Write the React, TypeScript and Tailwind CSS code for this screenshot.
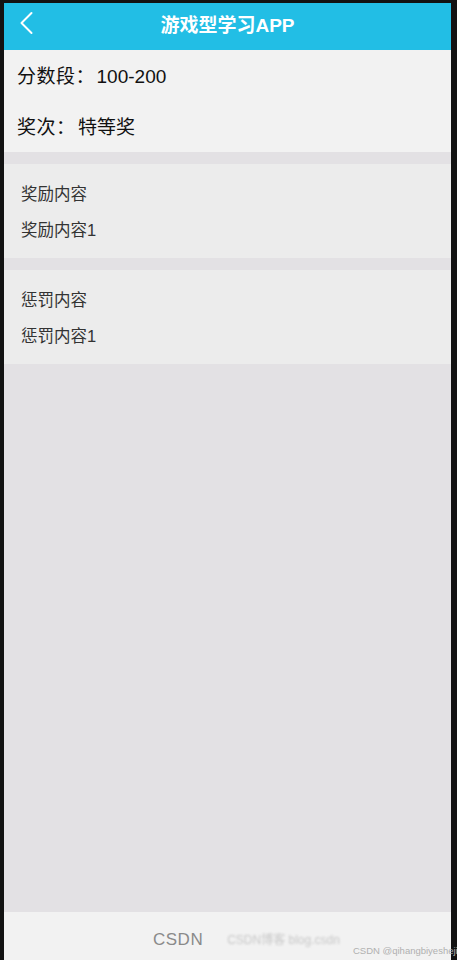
import React from "react";

const font = '"Liberation Sans", Arial, "Noto Sans CJK SC", sans-serif';

function Section({ title, item }: { title: string; item: string }) {
  return (
    <div className="bg-[#ececec] h-[94px] px-[17px] pt-[19px] text-[16.5px] text-[#333]">
      <div className="h-[22px] leading-[22px]">{title}</div>
      <div className="h-[22px] leading-[22px] mt-[14px]">{item}</div>
    </div>
  );
}

export default function App() {
  return (
    <div
      className="w-[457px] h-[960px] bg-[#121212] pt-[3px] pl-[4px] pr-[6px] flex flex-col"
      style={{ fontFamily: font }}
    >
      <div className="flex-1 flex flex-col bg-[#e3e1e4]">
        {/* title bar */}
        <div className="h-[47px] bg-[#22bee5] relative flex items-center justify-center">
          <svg
            className="absolute left-[15px] top-[8px]"
            width="16"
            height="26"
            viewBox="0 0 16 26"
            fill="none"
            stroke="#ffffff"
            strokeWidth="2"
            strokeLinecap="round"
            strokeLinejoin="round"
          >
            <path d="M12.5 2 L2.5 12 L12.5 22" />
          </svg>
          <span className="text-white font-bold text-[19px] leading-none -mt-[3px]">游戏型学习APP</span>
        </div>

        {/* score info */}
        <div className="bg-[#f2f2f2] h-[102px] px-[13px] pt-[14px] text-[19px] text-[#111]">
          <div className="h-[26px] leading-[26px]">
            <span className="tracking-[0.5px]">分数段</span>
            <span className="mr-[2px]">：</span>100-200
          </div>
          <div className="h-[26px] leading-[26px] mt-[25px]">
            <span className="tracking-[0.5px]">奖次</span>
            <span className="mr-[3px]">：</span>特等奖
          </div>
        </div>

        <div className="h-[12px]" />
        <Section title="奖励内容" item="奖励内容1" />
        <div className="h-[12px]" />
        <Section title="惩罚内容" item="惩罚内容1" />

        <div className="flex-1" />

        {/* footer */}
        <div className="h-[48px] bg-[#f2f2f2] relative flex items-center">
          <span className="ml-[149px] mt-[8px] text-[17px] text-[#8a8a8a] tracking-[0.5px]">CSDN</span>
          <span className="ml-[24px] mt-[8px] text-[12px] text-[#c8c8c8] blur-[1px]">CSDN博客 blog.csdn</span>
          <span className="absolute left-[349px] bottom-[2px] whitespace-nowrap text-[9.5px] text-[#b0b0b0]">
            CSDN @qihangbiyesheji
          </span>
        </div>
      </div>
    </div>
  );
}
